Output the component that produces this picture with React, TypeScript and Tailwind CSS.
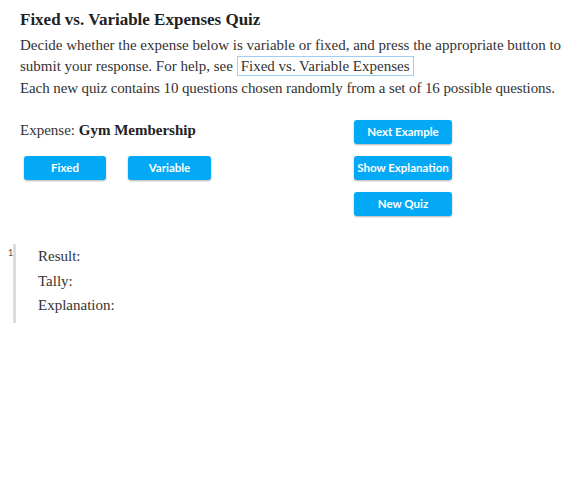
import React from 'react'

const serif = { fontFamily: '"Liberation Serif", "DejaVu Serif", serif' }
const sans = { fontFamily: 'Lato, "Open Sans", sans-serif' }

function QuizButton({ label, className = '' }: { label: string; className?: string }) {
    return (
        <button
            type="button"
            className={`h-[24px] px-0 whitespace-nowrap rounded-[3px] bg-[#03a9f4] text-white text-[11.5px] font-bold shadow-[0_1px_2px_rgba(0,0,0,0.3)] ${className}`}
            style={sans}
        >
            {label}
        </button>
    )
}

export default function App() {
    return (
        <div className="bg-white min-h-[500px] text-[#333]" style={serif}>
            <div className="pl-[20px] pt-[9px]">
                <h1 className="text-[17px] font-bold text-[#222] leading-[22px]">
                    Fixed vs. Variable Expenses Quiz
                </h1>
                <p className="mt-[4px] text-[15px] leading-[21px] whitespace-nowrap">
                    Decide whether the expense below is variable or fixed, and press the appropriate button to
                    <br />
                    submit your response. For help, see{' '}
                    <span className="inline-block border border-[#9fcdf3] px-[3px] leading-[18px]">
                        Fixed vs. Variable Expenses
                    </span>
                </p>
                <p className="mt-[1px] text-[15px] leading-[21px] whitespace-nowrap tracking-[-0.1px]">
                    Each new quiz contains 10 questions chosen randomly from a set of 16 possible questions.
                </p>

                {/* Quiz controls */}
                <div className="mt-[21px] flex">
                    <div className="w-[334px]">
                        <div className="text-[15px] leading-[20px]">
                            Expense: <span className="font-bold text-[#222]">Gym Membership</span>
                        </div>
                        <div className="mt-[16px] flex gap-[22px] pl-[4px]">
                            <QuizButton label="Fixed" className="w-[82px]" />
                            <QuizButton label="Variable" className="w-[83px]" />
                        </div>
                    </div>
                    <div className="flex flex-col gap-[12px]">
                        <QuizButton label="Next Example" className="w-[98px]" />
                        <QuizButton label="Show Explanation" className="w-[98px]" />
                        <QuizButton label="New Quiz" className="w-[98px]" />
                    </div>
                </div>
            </div>

            {/* Result panel */}
            <div className="mt-[28px] flex">
                <div className="w-[13px] pl-[8px] pt-[3px] text-[9px] leading-[12px] text-[#555]" style={sans}>
                    1
                </div>
                <div className="w-[3px] h-[79px] bg-[#ddd]" />
                <div className="pl-[22px] text-[15px] leading-[24.5px]">
                    <div>Result:</div>
                    <div>Tally:</div>
                    <div>Explanation:</div>
                </div>
            </div>
        </div>
    )
}
